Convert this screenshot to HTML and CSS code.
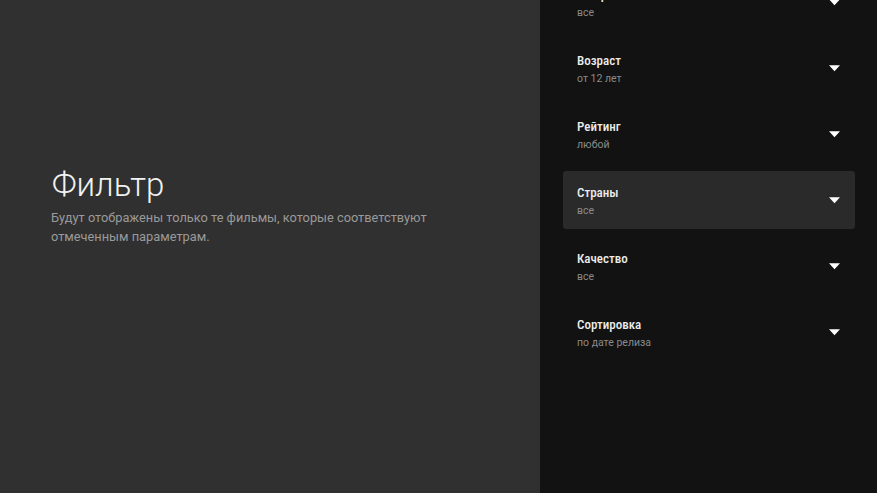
FILE: index.html
```html
<!DOCTYPE html>
<html lang="ru">
<head>
<meta charset="utf-8">
<link rel="stylesheet" href="styles.css">
</head>
<body>
<div class="screen">
  <section class="intro">
    <h1 class="title">Фильтр</h1>
    <p class="desc">Будут отображены только те фильмы, которые соответствуют отмеченным параметрам.</p>
  </section>
  <aside class="panel">
    <ul class="list">
      <li class="row"><div class="texts"><div class="name">Жанры</div><div class="value">все</div></div><svg class="arrow" viewBox="0 0 12 7"><path d="M0 0H12L6 6.5Z"/></svg></li>
      <li class="row"><div class="texts"><div class="name">Возраст</div><div class="value">от 12 лет</div></div><svg class="arrow" viewBox="0 0 12 7"><path d="M0 0H12L6 6.5Z"/></svg></li>
      <li class="row"><div class="texts"><div class="name">Рейтинг</div><div class="value">любой</div></div><svg class="arrow" viewBox="0 0 12 7"><path d="M0 0H12L6 6.5Z"/></svg></li>
      <li class="row active"><div class="texts"><div class="name">Страны</div><div class="value">все</div></div><svg class="arrow" viewBox="0 0 12 7"><path d="M0 0H12L6 6.5Z"/></svg></li>
      <li class="row"><div class="texts"><div class="name">Качество</div><div class="value">все</div></div><svg class="arrow" viewBox="0 0 12 7"><path d="M0 0H12L6 6.5Z"/></svg></li>
      <li class="row"><div class="texts"><div class="name">Сортировка</div><div class="value">по дате релиза</div></div><svg class="arrow" viewBox="0 0 12 7"><path d="M0 0H12L6 6.5Z"/></svg></li>
    </ul>
  </aside>
</div>
</body>
</html>
```

FILE: styles.css
```css
* { box-sizing: border-box; }
html, body { margin: 0; padding: 0; }
body {
  width: 877px;
  height: 493px;
  overflow: hidden;
  font-family: Roboto, "Liberation Sans", sans-serif;
  background: #121212;
}
.screen {
  display: flex;
  width: 877px;
  height: 493px;
}
.intro {
  width: 540px;
  background: #303030;
  display: flex;
  flex-direction: column;
  justify-content: center;
  padding: 0 0 82px 51px;
}
.title {
  margin: 0 0 0 1px;
  font-weight: 300;
  font-size: 33px;
  line-height: 40px;
  color: #f2f2f2;
}
.desc {
  margin: 3px 0 0;
  width: 420px;
  font-size: 12.8px;
  line-height: 19px;
  color: #9a9a9a;
}
.panel {
  flex: 1;
  background: #121212;
  overflow: hidden;
  padding: 0 22px 0 23px;
}
.list {
  list-style: none;
  margin: -27px 0 0;
  padding: 0;
  display: flex;
  flex-direction: column;
  gap: 8px;
}
.row {
  height: 58px;
  border-radius: 3px;
  display: flex;
  align-items: center;
  padding: 0 15px 0 14px;
}
.row.active { background: #2a2a2a; }
.texts { flex: 1; padding-top: 2px; }
.name {
  font-size: 13px;
  font-weight: 480;
  color: #ececec;
  line-height: 18px;
  font-stretch: 85%;
}
.value {
  margin-top: 2px;
  font-size: 10.5px;
  color: #8a8a8a;
  line-height: 14px;
  font-stretch: 90%;
}
.arrow {
  width: 11px;
  height: 7px;
  fill: #ffffff;
}
```
